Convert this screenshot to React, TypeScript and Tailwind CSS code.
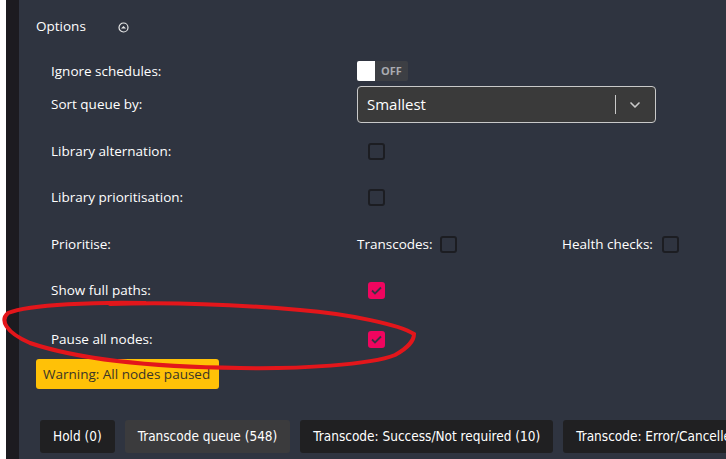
import { ChevronDown } from "lucide-react";

// 設定パネルのチェックボックス
function Box({ checked = false }: { checked?: boolean }) {
  if (checked) {
    return (
      <span className="flex h-[17px] w-[17px] items-center justify-center rounded-[3px] bg-[#f0055f]">
        <svg width="11" height="9" viewBox="0 0 11 9" fill="none">
          <path d="M1 4.5 L4 7.5 L10 1.5" stroke="#3a3245" strokeWidth="1.8" />
        </svg>
      </span>
    );
  }
  return <span className="block h-[17px] w-[17px] rounded-[3px] border-2 border-[#1c1d22]" />;
}

function Row({ label, h, children }: { label: string; h: string; children?: React.ReactNode }) {
  return (
    <div className={`flex items-center ${h}`}>
      <div className="w-[306px] shrink-0">{label}</div>
      <div className="flex flex-1 items-center">{children}</div>
    </div>
  );
}

const tabs = [
  { name: "Hold (0)", active: false },
  { name: "Transcode queue (548)", active: true },
  { name: "Transcode: Success/Not required (10)", active: false },
  { name: "Transcode: Error/Cancelled (0)", active: false },
];

export default function App() {
  return (
    <div
      className="relative flex h-[459px] w-[726px] overflow-hidden bg-white text-[13.5px] text-white"
      style={{ fontFamily: '"Open Sans", "Noto Sans", sans-serif' }}
    >
      <div className="ml-[6px] w-[13px] shrink-0 bg-[#1c1b20]" />
      <div className="flex-1 bg-[#2f3440] pl-[17px]">
        {/* ヘッダー */}
        <div className="flex h-[52px] items-start pt-[16px] leading-[20px]">
          <span>Options</span>
          <svg className="ml-[32px] mt-[6px]" width="11" height="11" viewBox="0 0 11 11">
            <circle cx="5.5" cy="5.5" r="4.5" fill="none" stroke="#e8e8e8" strokeWidth="1.2" />
            <path d="M3 6.6 L5.5 4 L8 6.6 Z" fill="#e8e8e8" />
          </svg>
        </div>

        <div className="pl-[15px] pt-[9px]">
          <Row label="Ignore schedules:" h="h-[20px]">
            <span className="flex h-[20px] items-stretch">
              <span className="w-[18px] rounded-l-[2px] bg-white" />
              <span className="flex w-[33px] items-center justify-center rounded-r-[2px] bg-[#3d3f44] text-[11px] font-bold text-[#a9abb0]">
                OFF
              </span>
            </span>
          </Row>
          <Row label="Sort queue by:" h="h-[37px] mt-[5px]">
            <div className="flex h-[37px] w-[299px] items-center rounded-[4px] border border-[#c9c9c9] bg-[#3a3a3a] pl-[9px] pr-[12px]">
              <span className="flex-1 text-[15px]">Smallest</span>
              <span className="h-[19px] w-px bg-[#c9c9c9]" />
              <ChevronDown className="ml-[11px] text-[#c9c9c9]" size={16} strokeWidth={2.5} />
            </div>
          </Row>
          <Row label="Library alternation:" h="h-[46px] mt-[5px]">
            <span className="ml-[11px]">
              <Box />
            </span>
          </Row>
          <Row label="Library prioritisation:" h="h-[47px]">
            <span className="ml-[11px]">
              <Box />
            </span>
          </Row>
          <Row label="Prioritise:" h="h-[46px]">
            <span className="w-[83px]">Transcodes:</span>
            <Box />
            <span className="ml-[105px] w-[100px]">Health checks:</span>
            <Box />
          </Row>
          <Row label="Show full paths:" h="h-[47px]">
            <span className="ml-[11px]">
              <Box checked />
            </span>
          </Row>
          <Row label="Pause all nodes:" h="h-[34px] mt-[8px]">
            <span className="ml-[11px]">
              <Box checked />
            </span>
          </Row>
        </div>

        <div className="mt-[3px] flex h-[30px] w-[183px] items-center rounded-[3px] bg-[#ffc107] pl-[7px] text-[#3a3528]">
          Warning: All nodes paused
        </div>

        <div
          className="mt-[31px] ml-[4px] flex gap-[10px] whitespace-nowrap text-[13.5px]"
          style={{ fontFamily: '"DejaVu Sans Condensed", "DejaVu Sans", sans-serif' }}
        >
          {tabs.map((t) => (
            <div
              key={t.name}
              className={`flex h-[33px] shrink-0 items-center rounded-[3px] px-[13px] ${
                t.active ? "bg-[#3b3b3d]" : "bg-[#202022]"
              }`}
            >
              {t.name}
            </div>
          ))}
        </div>
      </div>

      {/* 手書きの赤い丸 */}
      <svg className="pointer-events-none absolute left-0 top-0" width="726" height="459">
        <path
          d="M110 304 C160 302 230 304 300 310 C350 314 400 325 414 334 C414 340 408 348 395 355 C370 365 300 369 240 368 C150 367 80 360 30 343 C5 332 0 320 8 313 C30 304 100 302 145 303"
          fill="none"
          stroke="#e3161b"
          strokeWidth="4"
          strokeLinecap="round"
        />
      </svg>
    </div>
  );
}
